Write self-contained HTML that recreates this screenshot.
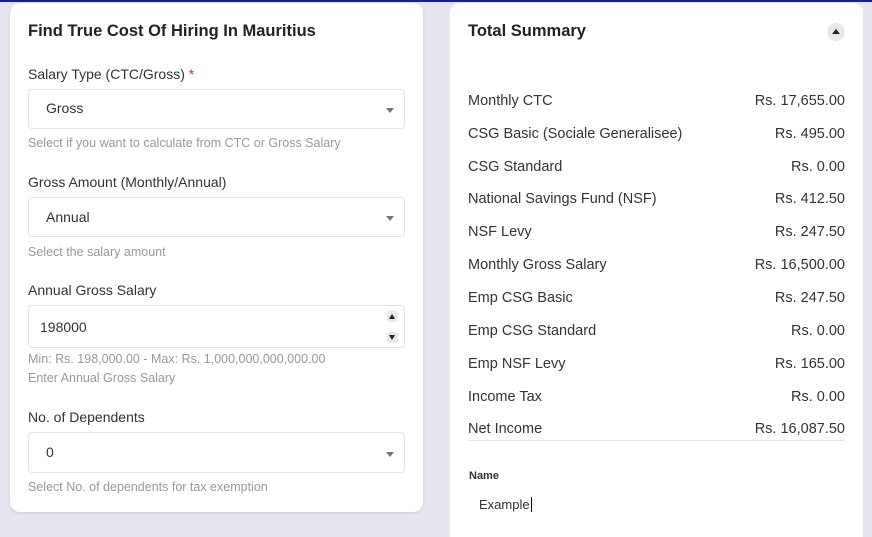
<!DOCTYPE html>
<html><head><style>
*{box-sizing:border-box;margin:0;padding:0}
html{width:872px;height:537px;overflow:hidden}
body{width:872px;height:537px;overflow:hidden;background:#e5e5f0;font-family:"Liberation Sans",sans-serif;color:#222;position:relative}
.bar{position:absolute;left:0;top:0;width:872px;height:2px;background:#1a1a9a}
.card{position:absolute;background:#fff;border-radius:10px}
.l{left:10px;top:3px;width:413px;height:509px;box-shadow:0 1px 3px rgba(0,0,0,.12)}
.r{left:450px;top:3px;width:413px;height:534px;border-radius:10px 10px 0 0}
h2{position:absolute;font-size:16.5px;font-weight:bold;color:#222}
.lab{position:absolute;left:18px;font-size:14px;color:#333}
.help{position:absolute;left:18px;font-size:12.5px;color:#999}
.box{position:absolute;left:18px;width:377px;border:1px solid #e3e3e3;border-radius:4px;font-size:14px;color:#333}
.box span{position:absolute;left:17px}
.car{position:absolute;right:10px;width:0;height:0;border-left:4px solid transparent;border-right:4px solid transparent;border-top:5px solid #777}
.row{position:absolute;left:18px;width:377px;font-size:14.5px;color:#333}
.row b{position:absolute;right:0;font-weight:normal}
.sp{position:absolute;right:6px;width:11px;height:11px;background:#e8e8e8;border-radius:3px}
</style></head><body>
<div class="bar"></div>
<div class="card l">
<h2 style="left:18px;top:19px">Find True Cost Of Hiring In Mauritius</h2>
<div class="lab" style="top:63px">Salary Type (CTC/Gross) <span style="color:#d33">*</span></div>
<div class="box" style="top:86px;height:40px"><span style="top:10px">Gross</span><div class="car" style="top:18px"></div></div>
<div class="help" style="top:133px">Select if you want to calculate from CTC or Gross Salary</div>
<div class="lab" style="top:171px">Gross Amount (Monthly/Annual)</div>
<div class="box" style="top:194px;height:40px"><span style="top:11px">Annual</span><div class="car" style="top:18px"></div></div>
<div class="help" style="top:242px">Select the salary amount</div>
<div class="lab" style="top:279px">Annual Gross Salary</div>
<div class="box" style="top:302px;height:43px"><span style="left:11px;top:13px">198000</span>
<div class="sp" style="top:5px"><div style="position:absolute;left:2px;top:3px;border-left:3.5px solid transparent;border-right:3.5px solid transparent;border-bottom:5px solid #222"></div></div>
<div class="sp" style="top:26px"><div style="position:absolute;left:2px;top:3px;border-left:3.5px solid transparent;border-right:3.5px solid transparent;border-top:5px solid #222"></div></div></div>
<div class="help" style="top:349px">Min: Rs. 198,000.00 - Max: Rs. 1,000,000,000,000.00</div>
<div class="help" style="top:368px">Enter Annual Gross Salary</div>
<div class="lab" style="top:406px">No. of Dependents</div>
<div class="box" style="top:429px;height:41px"><span style="top:11px">0</span><div class="car" style="top:19px"></div></div>
<div class="help" style="top:477px">Select No. of dependents for tax exemption</div>
</div>
<div class="card r">
<h2 style="left:18px;top:19px">Total Summary</h2>
<div style="position:absolute;left:377px;top:20px;width:18px;height:18px;border-radius:50%;background:#e8e8e8"><div style="position:absolute;left:5px;top:6px;border-left:4px solid transparent;border-right:4px solid transparent;border-bottom:5px solid #222"></div></div>
<div class="row" style="top:90px">Monthly CTC<b>Rs. 17,655.00</b></div>
<div class="row" style="top:123px">CSG Basic (Sociale Generalisee)<b>Rs. 495.00</b></div>
<div class="row" style="top:156px">CSG Standard<b>Rs. 0.00</b></div>
<div class="row" style="top:188px">National Savings Fund (NSF)<b>Rs. 412.50</b></div>
<div class="row" style="top:221px">NSF Levy<b>Rs. 247.50</b></div>
<div class="row" style="top:254px">Monthly Gross Salary<b>Rs. 16,500.00</b></div>
<div class="row" style="top:287px">Emp CSG Basic<b>Rs. 247.50</b></div>
<div class="row" style="top:320px">Emp CSG Standard<b>Rs. 0.00</b></div>
<div class="row" style="top:353px">Emp NSF Levy<b>Rs. 165.00</b></div>
<div class="row" style="top:386px">Income Tax<b>Rs. 0.00</b></div>
<div class="row" style="top:418px">Net Income<b>Rs. 16,087.50</b></div>
<div style="position:absolute;left:18px;top:437px;width:377px;height:1px;background:#e5e5e5"></div>
<div style="position:absolute;left:19px;top:467px;font-size:11px;font-weight:bold;color:#333">Name</div>
<div style="position:absolute;left:29px;top:494px;font-size:13px;color:#333">Example<span style="border-left:1px solid #000;margin-left:1px"></span></div>
</div>
</body></html>
